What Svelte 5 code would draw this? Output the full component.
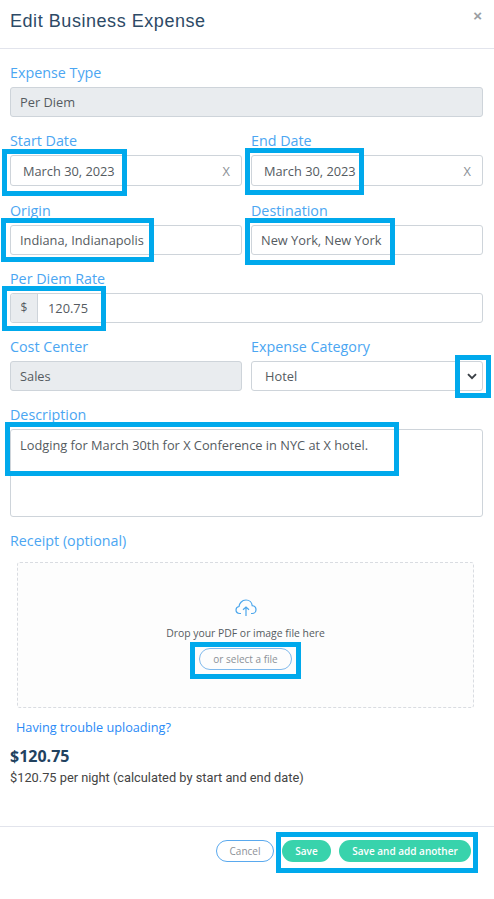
<script>
  // highlight boxes drawn over the form: left, top, right, bottom
  const marks = [
    [2, 149, 127, 196],
    [245, 148, 364, 195],
    [1, 218, 154, 262],
    [245, 218, 395, 265],
    [2, 286, 106, 331],
    [455, 355, 491, 398],
    [5, 422, 399, 476],
    [190, 642, 301, 679],
    [276, 832, 478, 873]
  ];
</script>

<div class="modal">
  <header class="modal-head">
    <h1>Edit Business Expense</h1>
    <span class="close">×</span>
  </header>

  <div class="modal-body">
    <div class="group">
      <span class="label">Expense Type</span>
      <div class="control disabled">Per Diem</div>
    </div>

    <div class="row row-date">
      <div class="group">
        <span class="label">Start Date</span>
        <div class="control date"><span>March 30, 2023</span><span class="clear">X</span></div>
      </div>
      <div class="group">
        <span class="label">End Date</span>
        <div class="control date"><span>March 30, 2023</span><span class="clear">X</span></div>
      </div>
    </div>

    <div class="row">
      <div class="group">
        <span class="label">Origin</span>
        <div class="control">Indiana, Indianapolis</div>
      </div>
      <div class="group">
        <span class="label">Destination</span>
        <div class="control">New York, New York</div>
      </div>
    </div>

    <div class="group">
      <span class="label">Per Diem Rate</span>
      <div class="control money">
        <span class="addon">$</span>
        <span class="amount">120.75</span>
      </div>
    </div>

    <div class="row">
      <div class="group">
        <span class="label">Cost Center</span>
        <div class="control disabled">Sales</div>
      </div>
      <div class="group">
        <span class="label">Expense Category</span>
        <div class="control select">
          <span>Hotel</span>
          <svg width="10" height="7" viewBox="0 0 10 7" aria-hidden="true">
            <path d="M1 1.2l4 4 4-4" fill="none" stroke="#3a3f45" stroke-width="1.9" />
          </svg>
        </div>
      </div>
    </div>

    <div class="group">
      <span class="label">Description</span>
      <div class="control area">Lodging for March 30th for X Conference in NYC at X hotel.</div>
    </div>

    <span class="label">Receipt (optional)</span>
    <div class="drop">
      <svg class="cloud" width="22" height="18" viewBox="0 0 22 18" aria-hidden="true">
        <path
          d="M6 14.5H4.8C2.6 14.5 1 12.9 1 11c0-1.8 1.300-3.200 3-3.500C4.300 4.800 6.600 1 11 1c3.600 0 5.900 2.700 6.200 5.600 2.100.2 3.800 2 3.800 4.100 0 2.100-1.700 3.800-3.800 3.800H16M11 17V8M8 10.800L11 8l3 2.800"
          fill="none"
          stroke="#4ba6ec"
          stroke-width="1.200"
        />
      </svg>
      <p>Drop your PDF or image file here</p>
      <span class="pill">or select a file</span>
    </div>

    <a class="trouble" href="#trouble">Having trouble uploading?</a>

    <div class="total">$120.75</div>
    <div class="note">$120.75 per night (calculated by start and end date)</div>
  </div>

  <footer class="modal-foot">
    <button class="btn cancel">Cancel</button>
    <button class="btn save">Save</button>
    <button class="btn save wide">Save and add another</button>
  </footer>

  {#each marks as [l, t, r, b]}
    <div class="mark" style="left:{l}px;top:{t}px;width:{r - l}px;height:{b - t}px"></div>
  {/each}
</div>

<style>
  :global(body) {
    margin: 0;
    background: #fff;
  }

  .modal {
    position: relative;
    width: 494px;
    height: 899px;
    overflow: hidden;
    font-family: "Open Sans", sans-serif;
    color: #555b61;
  }

  .modal-head {
    display: flex;
    justify-content: space-between;
    height: 49px;
    box-sizing: border-box;
    padding: 10px 12px 0 10px;
    border-bottom: 1px solid #e2e4ec;
  }

  h1 {
    margin: 0;
    font-family: "Liberation Sans", sans-serif;
    font-size: 18px;
    font-weight: 400;
    line-height: 22px;
    letter-spacing: 0.55px;
    color: #2d4a66;
  }

  .close {
    font-family: "Liberation Sans", sans-serif;
    font-size: 15px;
    font-weight: 700;
    line-height: 11px;
    color: #9a9ea3;
  }

  .modal-body {
    padding: 14px 11px 0 10px;
  }

  .row {
    display: grid;
    grid-template-columns: 232px 232px;
    gap: 9px;
  }

  .group {
    margin-bottom: 14px;
  }

  .row-date .control {
    height: 31px;
  }

  .row-date .group {
    margin-bottom: 15px;
  }

  .label {
    display: block;
    height: 24px;
    font-size: 14.3px;
    line-height: 20px;
    color: #4ba6f2;
  }

  .control {
    display: flex;
    align-items: center;
    height: 30px;
    box-sizing: border-box;
    padding: 0 9px;
    border: 1px solid #ced4da;
    border-radius: 3px;
    background: #fff;
    font-size: 12.8px;
  }

  .disabled {
    background: #e9ecef;
  }

  .date {
    justify-content: space-between;
    padding: 0 11px 0 12px;
  }

  .clear {
    color: #8b9096;
  }

  .money {
    padding: 0;
    align-items: stretch;
  }

  .addon {
    display: flex;
    align-items: center;
    justify-content: center;
    width: 26px;
    padding-bottom: 2px;
    border-right: 1px solid #ced4da;
    border-radius: 3px 0 0 3px;
    background: #e9ecef;
    font-size: 12px;
  }

  .amount {
    align-self: center;
    padding-left: 10px;
  }

  .select {
    justify-content: space-between;
    padding: 0 5px 0 13px;
  }

  .area {
    align-items: flex-start;
    height: 88px;
    padding: 6px 9px;
  }

  .drop {
    display: flex;
    flex-direction: column;
    align-items: center;
    box-sizing: border-box;
    width: 457px;
    height: 146px;
    margin: 7px 0 0 7px;
    padding-top: 36px;
    border: 1px dashed #d9dce1;
    border-radius: 3px;
    background: #fdfdfd;
  }

  .cloud {
    display: block;
  }

  .drop p {
    margin: 9px 0 0;
    font-size: 10.4px;
    line-height: 14px;
  }

  .pill {
    margin-top: 8px;
    width: 93px;
    height: 22px;
    box-sizing: border-box;
    border: 1px solid #7fb9ec;
    border-radius: 11px;
    font-size: 10px;
    line-height: 20px;
    text-align: center;
    color: #8c9197;
  }

  .trouble {
    display: block;
    margin: 9px 0 0 6px;
    font-size: 12.7px;
    line-height: 20px;
    color: #2a8af6;
    text-decoration: none;
  }

  .total {
    margin-top: 9px;
    font-size: 16px;
    font-weight: 700;
    line-height: 20px;
    color: #22425f;
  }

  .note {
    margin-top: 2px;
    font-family: Roboto, sans-serif;
    font-size: 12.8px;
    line-height: 20px;
    color: #444;
  }

  .modal-foot {
    position: absolute;
    left: 0;
    right: 0;
    top: 826px;
    display: flex;
    justify-content: flex-end;
    gap: 8px;
    padding: 13px 23px 0 0;
    border-top: 1px solid #e2e4ec;
  }

  .btn {
    height: 22px;
    padding: 0;
    border-radius: 11px;
    font-family: "Open Sans", sans-serif;
    font-size: 10px;
  }

  .cancel {
    width: 58px;
    border: 1px solid #5aa9ee;
    background: #fff;
    color: #8c9197;
  }

  .save {
    width: 49px;
    border: 0;
    background: #38d3ac;
    color: #fff;
    font-weight: 600;
  }

  .wide {
    width: 132px;
  }

  .mark {
    position: absolute;
    box-sizing: border-box;
    border: 5px solid #00a9ec;
    pointer-events: none;
  }
</style>
